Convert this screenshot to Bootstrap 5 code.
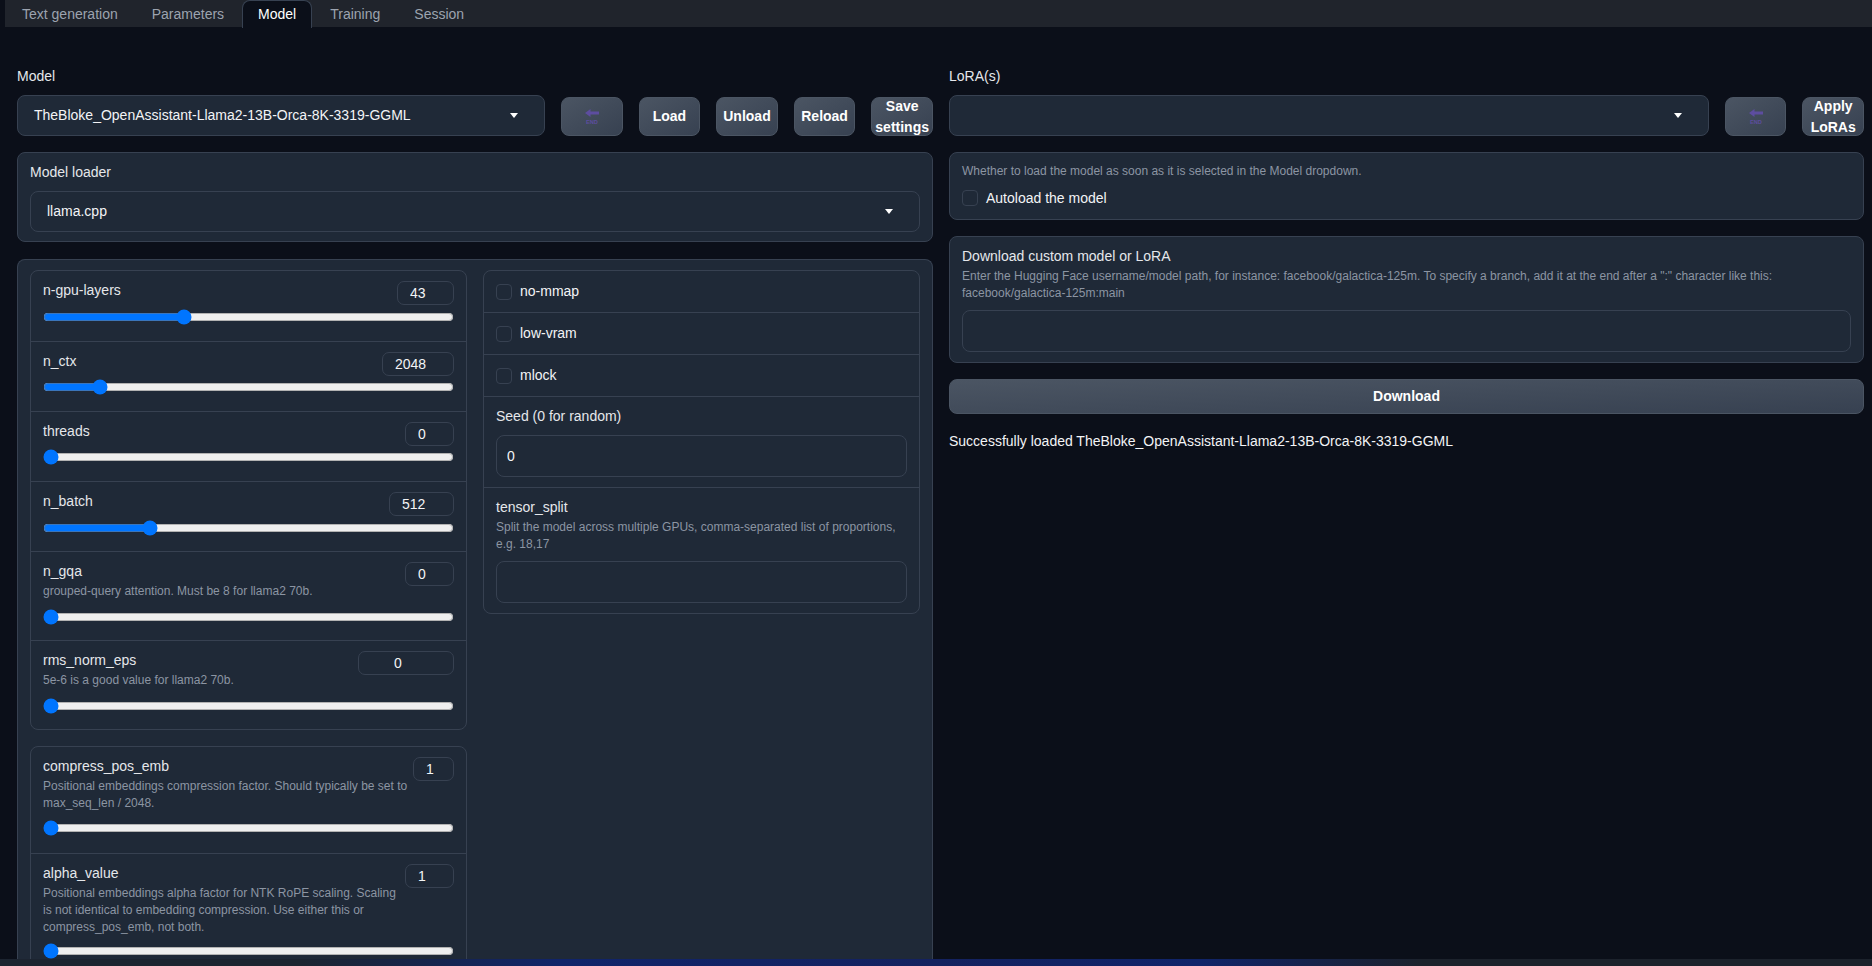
<!DOCTYPE html>
<html lang="en">
<head>
<meta charset="utf-8">
<title>text-generation-webui</title>
<link href="https://cdn.jsdelivr.net/npm/bootstrap@5.3.0/dist/css/bootstrap.min.css" rel="stylesheet">
<style>
html, body { height: 100%; }
body { background: #0b0f19; color: #f3f4f6; font-family: "Liberation Sans", Arial, sans-serif; font-size: 14px; line-height: 20px; }
.tabbar { margin-left: 5px; padding-left: 1px; height: 27px; background: #20242c; border-bottom: 0; gap: 2px; flex-wrap: nowrap; }
.tabbar .nav-link { padding: 0 15px; height: 27px; line-height: 26px; color: #9ca3af; background: transparent; border: 1px solid transparent; border-bottom: 0; margin: 0; border-radius: 8px 8px 0 0; }
.tabbar .nav-link.active { height: 28px; background: #0b0f19; color: #fff; border-color: #374151; }
.page { padding: 39px 8px 0 17px; gap: 16px; min-height: 0; }
.left-side { flex: 0 0 916px; min-width: 0; }
.right-side { flex: 1 1 0; min-width: 0; }
.head-label { height: 20px; margin-bottom: 9px; color: #e5e7eb; }
.top-row { margin-bottom: 16px; }
.picker { height: 41px; background: #1f2937; border: 1px solid #374151; border-radius: 8px; padding: 0 26px 0 16px; color: #f3f4f6; }
.picker-text { margin-top: -2px; }
.picker-model { flex: 0 0 528px; }
.caret-down { width: 0; height: 0; border-left: 4px solid transparent; border-right: 4px solid transparent; border-top: 5px solid #fff; }
.gr-btn { height: 39px; padding: 0; font-weight: 700; font-size: 14px; line-height: 21px; color: #fff; border: 1px solid #4b5563; border-radius: 8px; background: linear-gradient(to bottom right, #4b5563, #374151); display: flex; align-items: center; justify-content: center; text-align: center; }
.btn-fixed { flex: 0 0 61.6px; }
.btn-fill { flex: 1 1 0; }
.gr-block { background: #1f2937; border: 1px solid #374151; border-radius: 8px; padding: 10px 12px; }
.loader-block { padding-top: 9px; padding-bottom: 9px; margin-bottom: 17px; }
.block-title { line-height: 18px; color: #e5e7eb; }
.info-text { font-size: 12px; line-height: 16.8px; color: #8c95a3; margin-top: 3.4px; margin-bottom: 4.8px; }
.params { border-bottom: 0; border-radius: 8px 8px 0 0; gap: 16px; padding-bottom: 0; }
.params > div { flex: 1 1 0; min-width: 0; }
.sub-block { border: 1px solid #374151; border-radius: 8px; margin-bottom: 16px; }
.param-row { padding: 10px 12px 16px; border-bottom: 1px solid #374151; }
.param-row:first-child { padding-bottom: 17px; }
.param-row:last-child { border-bottom: 0; }
.param-head { gap: 4px; }
.param-text { flex: 1 1 0; min-width: 0; }
.num-box.form-control { flex: 0 0 auto; height: 24px; min-height: 0; padding: 0 0 0 12px; font-size: 14px; line-height: 22px; color: #f3f4f6; background: #1f2937; border: 1px solid #374151; border-radius: 7px; box-shadow: none; }
.nb-41 { width: 41px; } .nb-49 { width: 49px; } .nb-57 { width: 57px; } .nb-65 { width: 65px; } .nb-72 { width: 72px; }
.nb-96 { width: 96px; } .num-box.nb-96 { padding-left: 35px; }
.gr-range { display: block; width: 100%; height: 16px; margin: 3px 0 0; }
.gr-range.range-low { margin-top: 4px; margin-bottom: -1px; }
.check-row { padding: 13px 12px 12px; height: 42px; border-bottom: 1px solid #374151; gap: 8px; line-height: 16px; }
.check-row span { margin-top: -2px; }
.gr-check.form-check-input { width: 16px; height: 16px; margin: 0; flex: none; background-color: #1f2937; border: 1px solid #374151; border-radius: 4px; }
.field-row { padding: 10px 12px 10px; border-bottom: 1px solid #374151; }
.field-row:last-child { border-bottom: 0; }
.gr-text.form-control { height: 42px; padding: 0 10px; font-size: 14px; color: #f3f4f6; background: #1f2937; border: 1px solid #374151; border-radius: 8px; box-shadow: none; }
.seed-label { line-height: 18px; margin-bottom: 10px; color: #e5e7eb; }
.after-info { margin-top: 8.2px; }
.auto-block { height: 68px; margin-bottom: 16px; }
.auto-block .info-text { margin: 0 0 10px; }
.auto-row { gap: 8px; line-height: 16px; }
.dl-block { margin-bottom: 16px; }
.dl-btn { height: 35px; margin-bottom: 17px; }
.status-line { color: #f3f4f6; }
.bottom-strip { height: 7px; background: linear-gradient(90deg, #1c2430 0, #1c2430 16%, #10246a 30%, #14225f 50%, #10246a 64%, #1c222c 76%, #1c222c 100%); }
.end-icon { width: 14px; height: 15px; display: block; }
</style>
</head>
<body class="d-flex flex-column overflow-hidden">
<ul class="nav nav-tabs tabbar flex-shrink-0">
  <li class="nav-item"><a class="nav-link" href="#">Text generation</a></li>
  <li class="nav-item"><a class="nav-link" href="#">Parameters</a></li>
  <li class="nav-item"><a class="nav-link active" href="#">Model</a></li>
  <li class="nav-item"><a class="nav-link" href="#">Training</a></li>
  <li class="nav-item"><a class="nav-link" href="#">Session</a></li>
</ul>

<main class="page d-flex flex-grow-1 overflow-hidden">
  <section class="left-side">
    <div class="d-flex gap-3 align-items-end top-row">
      <div class="picker-model">
        <div class="head-label">Model</div>
        <div class="picker d-flex align-items-center justify-content-between">
          <span class="picker-text">TheBloke_OpenAssistant-Llama2-13B-Orca-8K-3319-GGML</span><span class="caret-down"></span>
        </div>
      </div>
      <button class="gr-btn btn-fill" type="button" aria-label="Refresh"><svg class="end-icon" viewBox="0 0 14 15"><path fill="#5d4d9f" d="M0 4 L5.5 0 V2.5 H14 V5.5 H5.5 V8 Z"/><text x="7" y="14.5" text-anchor="middle" font-size="5.6" font-weight="700" fill="#5d4d9f" font-family="Liberation Sans">END</text></svg></button>
      <button class="gr-btn btn-fill" type="button">Load</button>
      <button class="gr-btn btn-fill" type="button">Unload</button>
      <button class="gr-btn btn-fill" type="button">Reload</button>
      <button class="gr-btn btn-fill" type="button">Save settings</button>
    </div>

    <div class="gr-block loader-block">
      <div class="head-label">Model loader</div>
      <div class="picker d-flex align-items-center justify-content-between">
        <span class="picker-text">llama.cpp</span><span class="caret-down"></span>
      </div>
    </div>

    <div class="gr-block params d-flex align-items-start">
      <div>
        <div class="sub-block">
          <div class="param-row">
            <div class="param-head d-flex"><div class="param-text block-title">n-gpu-layers</div><input class="form-control num-box nb-57" type="text" value="43"></div>
            <input class="gr-range range-low" type="range" min="0" max="128" value="43">
          </div>
          <div class="param-row">
            <div class="param-head d-flex"><div class="param-text block-title">n_ctx</div><input class="form-control num-box nb-72" type="text" value="2048"></div>
            <input class="gr-range" type="range" min="0" max="16384" value="2048">
          </div>
          <div class="param-row">
            <div class="param-head d-flex"><div class="param-text block-title">threads</div><input class="form-control num-box nb-49" type="text" value="0"></div>
            <input class="gr-range" type="range" min="0" max="32" value="0">
          </div>
          <div class="param-row">
            <div class="param-head d-flex"><div class="param-text block-title">n_batch</div><input class="form-control num-box nb-65" type="text" value="512"></div>
            <input class="gr-range range-low" type="range" min="0" max="2048" value="512">
          </div>
          <div class="param-row">
            <div class="param-head d-flex"><div class="param-text"><div class="block-title">n_gqa</div><div class="info-text">grouped-query attention. Must be 8 for llama2 70b.</div></div><input class="form-control num-box nb-49" type="text" value="0"></div>
            <input class="gr-range range-low" type="range" min="0" max="16" value="0">
          </div>
          <div class="param-row">
            <div class="param-head d-flex"><div class="param-text"><div class="block-title">rms_norm_eps</div><div class="info-text">5e-6 is a good value for llama2 70b.</div></div><input class="form-control num-box nb-96" type="text" value="0"></div>
            <input class="gr-range range-low" type="range" min="0" max="1" step="0.000001" value="0">
          </div>
        </div>
        <div class="sub-block">
          <div class="param-row">
            <div class="param-head d-flex"><div class="param-text"><div class="block-title">compress_pos_emb</div><div class="info-text">Positional embeddings compression factor. Should typically be set to max_seq_len / 2048.</div></div><input class="form-control num-box nb-41" type="text" value="1"></div>
            <input class="gr-range" type="range" min="1" max="8" value="1">
          </div>
          <div class="param-row">
            <div class="param-head d-flex"><div class="param-text"><div class="block-title">alpha_value</div><div class="info-text">Positional embeddings alpha factor for NTK RoPE scaling. Scaling is not identical to embedding compression. Use either this or compress_pos_emb, not both.</div></div><input class="form-control num-box nb-49" type="text" value="1"></div>
            <input class="gr-range" type="range" min="1" max="8" value="1">
          </div>
        </div>
      </div>
      <div>
        <div class="sub-block">
          <label class="check-row d-flex align-items-center"><input class="form-check-input gr-check" type="checkbox"><span>no-mmap</span></label>
          <label class="check-row d-flex align-items-center"><input class="form-check-input gr-check" type="checkbox"><span>low-vram</span></label>
          <label class="check-row d-flex align-items-center"><input class="form-check-input gr-check" type="checkbox"><span>mlock</span></label>
          <div class="field-row">
            <div class="seed-label">Seed (0 for random)</div>
            <input class="form-control gr-text" type="text" value="0">
          </div>
          <div class="field-row">
            <div class="block-title">tensor_split</div>
            <div class="info-text">Split the model across multiple GPUs, comma-separated list of proportions, e.g. 18,17</div>
            <input class="form-control gr-text after-info" type="text">
          </div>
        </div>
      </div>
    </div>
  </section>

  <section class="right-side">
    <div class="d-flex gap-3 align-items-end top-row">
      <div class="flex-grow-1">
        <div class="head-label">LoRA(s)</div>
        <div class="picker d-flex align-items-center justify-content-end"><span class="caret-down"></span></div>
      </div>
      <button class="gr-btn btn-fixed" type="button" aria-label="Refresh"><svg class="end-icon" viewBox="0 0 14 15"><path fill="#5d4d9f" d="M0 4 L5.5 0 V2.5 H14 V5.5 H5.5 V8 Z"/><text x="7" y="14.5" text-anchor="middle" font-size="5.6" font-weight="700" fill="#5d4d9f" font-family="Liberation Sans">END</text></svg></button>
      <button class="gr-btn btn-fixed" type="button">Apply LoRAs</button>
    </div>

    <div class="gr-block auto-block">
      <div class="info-text">Whether to load the model as soon as it is selected in the Model dropdown.</div>
      <label class="auto-row d-flex align-items-center"><input class="form-check-input gr-check" type="checkbox"><span>Autoload the model</span></label>
    </div>

    <div class="gr-block dl-block">
      <div class="block-title">Download custom model or LoRA</div>
      <div class="info-text">Enter the Hugging Face username/model path, for instance: facebook/galactica-125m. To specify a branch, add it at the end after a ":" character like this: facebook/galactica-125m:main</div>
      <input class="form-control gr-text after-info" type="text">
    </div>

    <button class="gr-btn dl-btn w-100" type="button">Download</button>
    <div class="status-line">Successfully loaded TheBloke_OpenAssistant-Llama2-13B-Orca-8K-3319-GGML</div>
  </section>
</main>
<div class="bottom-strip flex-shrink-0"></div>
<script src="https://cdn.jsdelivr.net/npm/bootstrap@5.3.0/dist/js/bootstrap.bundle.min.js"></script>
</body>
</html>
